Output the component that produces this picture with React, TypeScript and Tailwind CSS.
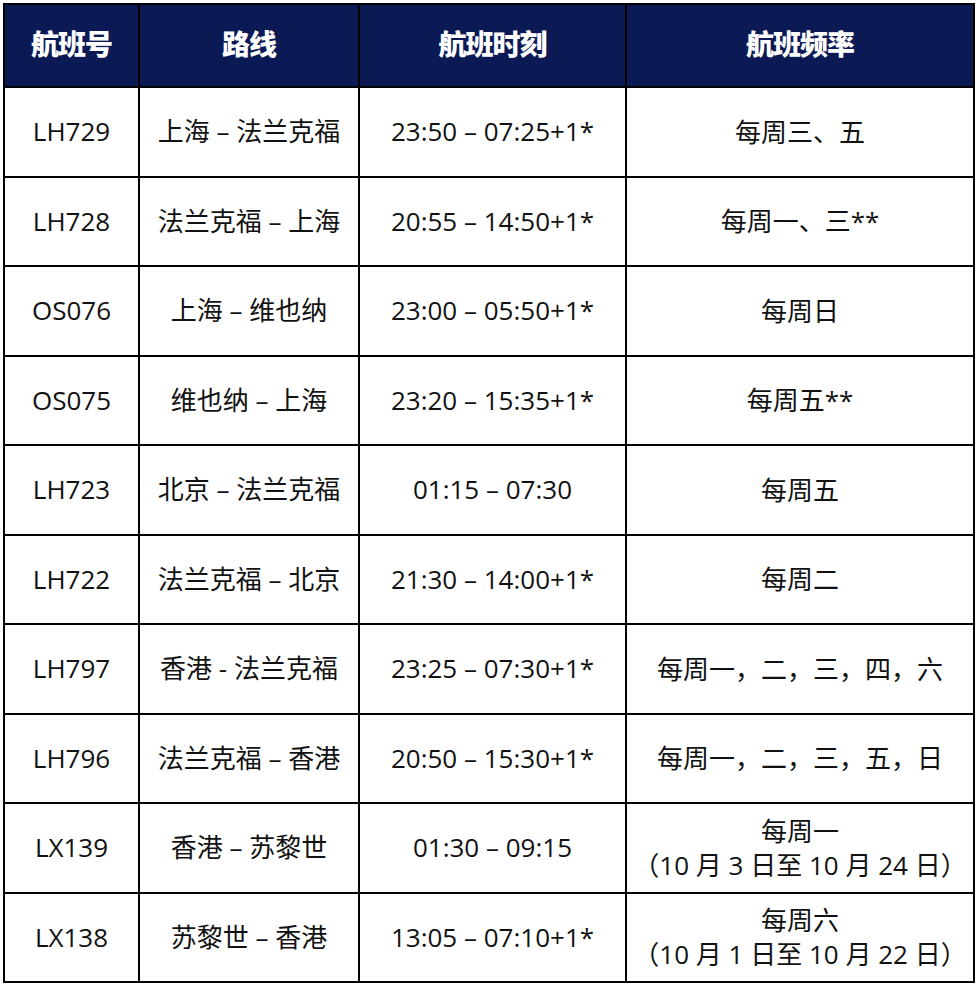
const rows = [
  { no: "LH729", route: "上海 – 法兰克福", time: "23:50 – 07:25+1*", freq: ["每周三、五"] },
  { no: "LH728", route: "法兰克福 – 上海", time: "20:55 – 14:50+1*", freq: ["每周一、三**"] },
  { no: "OS076", route: "上海 – 维也纳", time: "23:00 – 05:50+1*", freq: ["每周日"] },
  { no: "OS075", route: "维也纳 – 上海", time: "23:20 – 15:35+1*", freq: ["每周五**"] },
  { no: "LH723", route: "北京 – 法兰克福", time: "01:15 – 07:30", freq: ["每周五"] },
  { no: "LH722", route: "法兰克福 – 北京", time: "21:30 – 14:00+1*", freq: ["每周二"] },
  { no: "LH797", route: "香港 - 法兰克福", time: "23:25 – 07:30+1*", freq: ["每周一，二，三，四，六"] },
  { no: "LH796", route: "法兰克福 – 香港", time: "20:50 – 15:30+1*", freq: ["每周一，二，三，五，日"] },
  { no: "LX139", route: "香港 – 苏黎世", time: "01:30 – 09:15", freq: ["每周一", "（10 月 3 日至 10 月 24 日）"] },
  { no: "LX138", route: "苏黎世 – 香港", time: "13:05 – 07:10+1*", freq: ["每周六", "（10 月 1 日至 10 月 22 日）"] },
];

const headers = ["航班号", "路线", "航班时刻", "航班频率"];

export default function App() {
  return (
    <div
      className="w-[980px] h-[988px] bg-white pt-[3px] pl-[3px]"
      style={{ fontFamily: '"Open Sans", "Noto Sans CJK SC", sans-serif' }}
    >
      <table className="w-[970px] table-fixed border-collapse text-center">
        <colgroup>
          <col className="w-[135px]" />
          <col className="w-[220px]" />
          <col className="w-[267px]" />
          <col className="w-[348px]" />
        </colgroup>
        <thead>
          <tr className="h-[83px] bg-[#0b1a55]">
            {headers.map((h) => (
              <th
                key={h}
                className="border-2 border-black pb-[6px] text-white text-[28px] font-black tracking-[-1px]"
                style={{ fontFamily: '"Noto Sans CJK SC", sans-serif' }}
              >
                {h}
              </th>
            ))}
          </tr>
        </thead>
        <tbody className="text-[26px] text-[#111]">
          {rows.map((r) => (
            <tr key={r.no} className="h-[89.5px]">
              <td className="border-2 border-black">{r.no}</td>
              <td className="border-2 border-black">{r.route}</td>
              <td className="border-2 border-black">{r.time}</td>
              <td className="border-2 border-black leading-[34px]">
                {r.freq.map((f) => (
                  <div key={f}>{f}</div>
                ))}
              </td>
            </tr>
          ))}
        </tbody>
      </table>
    </div>
  );
}
